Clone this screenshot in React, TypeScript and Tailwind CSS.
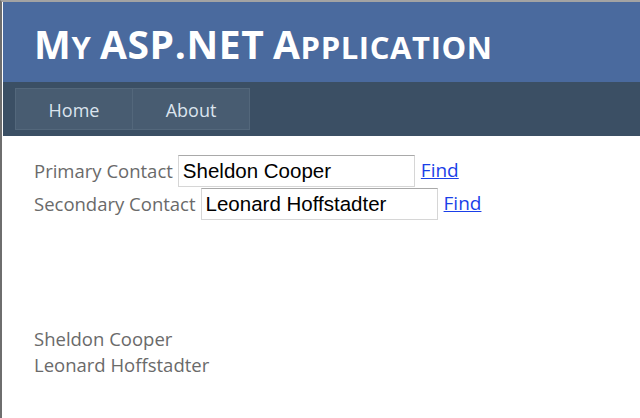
import React, { useState } from "react";

const ui = { fontFamily: '"Open Sans", "Noto Sans", sans-serif' };
const arial = { fontFamily: '"Liberation Sans", Arial, sans-serif' };

function ContactRow({ label, value }: { label: string; value: string }) {
  const [text, setText] = useState(value);
  return (
    <div className="flex items-center h-[33px]">
      <span className="text-[18.5px] text-[#6a6a6a] mr-[5px]">{label}</span>
      <input
        value={text}
        onChange={(e) => setText(e.target.value)}
        className="w-[237px] h-[32px] px-[4px] border border-[#d6d6d6] border-t-[#a9a9a9] text-[20.5px] text-black outline-none"
        style={arial}
      />
      <a href="#" className="ml-[6px] text-[19px] text-[#1a3fe8] underline">
        Find
      </a>
    </div>
  );
}

// small-caps title: capitals big, lowercase shown as smaller capitals
function Title({ text }: { text: string }) {
  return (
    <h1 className="text-white font-bold leading-none whitespace-pre tracking-[0.6px] pt-[3px]">
      {text.split("").map((ch, i) =>
        ch === " " || ch !== ch.toUpperCase() ? (
          <span key={i} className="text-[31px] uppercase">
            {ch}
          </span>
        ) : (
          <span key={i} className="text-[39px]">
            {ch}
          </span>
        )
      )}
    </h1>
  );
}

export default function App() {
  return (
    <div
      className="w-full h-[418px] bg-white border-t-2 border-t-[#a3a3a3] border-l-2 border-l-[#6e6e6e] pl-px overflow-hidden"
      style={ui}
    >
      {/* Header */}
      <header className="h-[80px] bg-[#4a6a9e] flex items-center pl-[31px]">
        <Title text="My ASP.NET Application" />
      </header>

      {/* Nav */}
      <nav className="h-[54px] bg-[#3b4f64] pl-[12px] pt-[6px]">
        <ul className="flex">
          {["Home", "About"].map((item) => (
            <li
              key={item}
              className="w-[118px] h-[42px] bg-[#485c71] border border-[#53677b] -ml-px first:ml-0 flex items-center justify-center pt-[3px] text-[18px] text-[#dbe4ee]"
            >
              {item}
            </li>
          ))}
        </ul>
      </nav>

      {/* Body */}
      <main className="pl-[31px] pt-[18px]">
        <ContactRow label="Primary Contact" value="Sheldon Cooper" />
        <ContactRow label="Secondary Contact" value="Leonard Hoffstadter" />

        <div className="mt-[106px] text-[18.5px] leading-[26px] text-[#6a6a6a]">
          <div>Sheldon Cooper</div>
          <div>Leonard Hoffstadter</div>
        </div>
      </main>
    </div>
  );
}
